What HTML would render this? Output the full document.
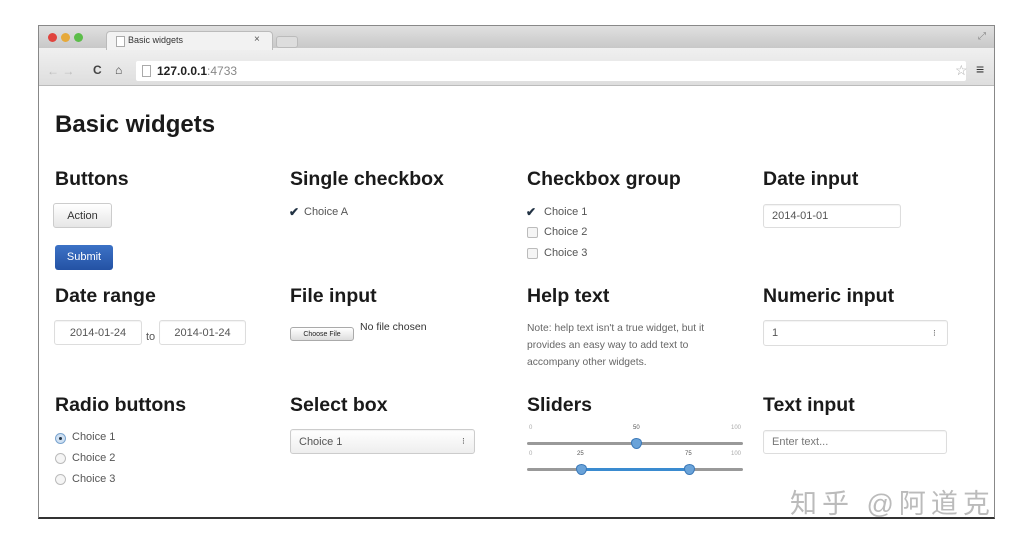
<!DOCTYPE html>
<html><head><meta charset="utf-8"><style>
body{margin:0;width:1022px;height:544px;background:#fff;position:relative;overflow:hidden;font-family:"Liberation Sans",Arial,sans-serif;color:#333}
.a{position:absolute;white-space:nowrap}
.h{position:absolute;font-weight:bold;font-size:19.5px;color:#1a1a1a;white-space:nowrap}
.t{font-size:11px;color:#555}
.inp{position:absolute;border:1px solid #ddd;border-radius:3px;background:#fff;box-shadow:inset 0 1px 1px rgba(0,0,0,.05);font-size:11px;color:#555;box-sizing:border-box;padding-left:8px;display:flex;align-items:center}
.cb{position:absolute;width:9px;height:9px;border:1px solid #bbb;border-radius:2px;background:#f5f5f5}
.rd{position:absolute;width:9px;height:9px;border:1px solid #bbb;border-radius:50%;background:#f5f5f5}
.track{position:absolute;height:3px;background:#999;border-radius:2px}
.hd{position:absolute;width:9px;height:9px;background:#6aa3d9;border:1px solid #3a78b8;border-radius:50% 50% 50% 50%/40% 40% 60% 60%}
.sl{position:absolute;font-size:6px;color:#aaa}
</style></head><body>
<div class="a" style="left:38px;top:25px;width:957px;height:494px;border:1px solid #888;border-bottom:2px solid #333;box-sizing:border-box;background:#fff"></div>
<div class="a" style="left:39px;top:26px;width:955px;height:22px;background:linear-gradient(#e0e0e0,#c8c8c8)"></div>
<div class="a" style="left:39px;top:48px;width:955px;height:37px;background:linear-gradient(#f0f0f0,#dedede);border-bottom:1px solid #bbb"></div>
<div class="a" style="left:48px;top:33px;width:9px;height:9px;border-radius:50%;background:#e0443e"></div>
<div class="a" style="left:61px;top:33px;width:9px;height:9px;border-radius:50%;background:#e6a93a"></div>
<div class="a" style="left:74px;top:33px;width:9px;height:9px;border-radius:50%;background:#5cbd4a"></div>
<div class="a" style="left:106px;top:31px;width:165px;height:18px;background:#f2f2f2;border:1px solid #bbb;border-bottom:none;border-radius:4px 4px 0 0"></div>
<div class="a" style="left:116px;top:36px;width:7px;height:9px;border:1px solid #aaa;background:#fff"></div>
<div class="a" style="left:128px;top:35px;font-size:9px;color:#333">Basic widgets</div>
<div class="a" style="left:254px;top:34px;font-size:10px;color:#555">×</div>
<div class="a" style="left:276px;top:36px;width:20px;height:10px;border:1px solid #bbb;border-radius:3px;background:#ddd"></div>
<div class="a" style="left:978px;top:31px;font-size:10px;color:#888">⤢</div>
<div class="a" style="left:47px;top:64px;font-size:12px;color:#bbb">← →</div>
<div class="a" style="left:93px;top:63px;font-size:12px;font-weight:bold;color:#444">C</div>
<div class="a" style="left:115px;top:63px;font-size:12px;font-weight:bold;color:#444">⌂</div>
<div class="a" style="left:136px;top:61px;width:830px;height:20px;background:#fff;border-radius:2px"></div>
<div class="a" style="left:142px;top:65px;width:7px;height:10px;border:1px solid #aaa"></div>
<div class="a" style="left:157px;top:64px;font-size:12px;color:#222;font-weight:bold">127.0.0.1<span style="color:#888;font-weight:normal">:4733</span></div>
<div class="a" style="left:955px;top:62px;font-size:14px;color:#aaa">☆</div>
<div class="a" style="left:976px;top:61px;font-size:14px;color:#333">≡</div>

<div class="a" style="left:55px;top:111px;font-size:24px;font-weight:bold;color:#1a1a1a">Basic widgets</div>

<div class="h" style="left:55px;top:168px">Buttons</div>
<div class="h" style="left:290px;top:168px">Single checkbox</div>
<div class="h" style="left:527px;top:168px">Checkbox group</div>
<div class="h" style="left:763px;top:168px">Date input</div>

<div class="a" style="left:53px;top:203px;width:59px;height:25px;border:1px solid #ccc;border-radius:3px;background:linear-gradient(#fff,#e6e6e6);font-size:11px;color:#333;text-align:center;line-height:25px;box-sizing:border-box">Action</div>
<div class="a" style="left:55px;top:245px;width:58px;height:25px;border-radius:3px;background:linear-gradient(#3c72c6,#2452a4);font-size:11px;color:#fff;text-align:center;line-height:25px">Submit</div>

<div class="a" style="left:289px;top:205px;font-size:12px;color:#234;font-weight:bold">✔</div>
<div class="a t" style="left:304px;top:206px">Choice A</div>

<div class="a" style="left:526px;top:205px;font-size:12px;color:#234;font-weight:bold">✔</div>
<div class="a t" style="left:544px;top:206px">Choice 1</div>
<div class="cb" style="left:527px;top:227px"></div>
<div class="a t" style="left:544px;top:226px">Choice 2</div>
<div class="cb" style="left:527px;top:248px"></div>
<div class="a t" style="left:544px;top:247px">Choice 3</div>

<div class="inp" style="left:763px;top:204px;width:138px;height:24px">2014-01-01</div>

<div class="h" style="left:55px;top:285px">Date range</div>
<div class="h" style="left:290px;top:285px">File input</div>
<div class="h" style="left:527px;top:285px">Help text</div>
<div class="h" style="left:763px;top:285px">Numeric input</div>

<div class="inp" style="left:54px;top:320px;width:88px;height:25px;justify-content:center;padding:0">2014-01-24</div>
<div class="a t" style="left:146px;top:331px">to</div>
<div class="inp" style="left:159px;top:320px;width:87px;height:25px;justify-content:center;padding:0">2014-01-24</div>

<div class="a" style="left:290px;top:327px;width:64px;height:14px;border:1px solid #aaa;border-radius:3px;background:linear-gradient(#fff,#ddd);font-size:7px;text-align:center;line-height:14px;box-sizing:border-box;color:#222">Choose File</div>
<div class="a" style="left:360px;top:321px;font-size:10.5px;color:#333">No file chosen</div>

<div class="a" style="left:527px;top:320px;font-size:10.3px;color:#666;line-height:17px">Note: help text isn't a true widget, but it<br>provides an easy way to add text to<br>accompany other widgets.</div>

<div class="inp" style="left:763px;top:320px;width:185px;height:26px">1</div>
<div class="a" style="left:933px;top:328px;font-size:9px;color:#555">⁝</div>

<div class="h" style="left:55px;top:394px">Radio buttons</div>
<div class="h" style="left:290px;top:394px">Select box</div>
<div class="h" style="left:527px;top:394px">Sliders</div>
<div class="h" style="left:763px;top:394px">Text input</div>

<div class="rd" style="left:55px;top:433px;background:#cfe0f2;border-color:#7aa4cf"></div>
<div class="a" style="left:59px;top:437px;width:3px;height:3px;border-radius:50%;background:#234"></div>
<div class="a t" style="left:72px;top:431px">Choice 1</div>
<div class="rd" style="left:55px;top:453px"></div>
<div class="a t" style="left:72px;top:452px">Choice 2</div>
<div class="rd" style="left:55px;top:474px"></div>
<div class="a t" style="left:72px;top:473px">Choice 3</div>

<div class="inp" style="left:290px;top:429px;width:185px;height:25px;background:linear-gradient(#fff,#eee);border-color:#ccc">Choice 1</div>
<div class="a" style="left:462px;top:436px;font-size:9px;color:#444">⁝</div>

<div class="sl" style="left:529px;top:425px">0</div>
<div class="sl" style="left:633px;top:425px;color:#555">50</div>
<div class="sl" style="left:731px;top:425px">100</div>
<div class="track" style="left:527px;top:442px;width:216px"></div>
<div class="hd" style="left:631px;top:438px"></div>
<div class="sl" style="left:529px;top:451px">0</div>
<div class="sl" style="left:577px;top:451px;color:#555">25</div>
<div class="sl" style="left:685px;top:451px;color:#555">75</div>
<div class="sl" style="left:731px;top:451px">100</div>
<div class="track" style="left:527px;top:468px;width:216px"></div>
<div class="track" style="left:581px;top:468px;width:108px;background:#3a8bd0"></div>
<div class="hd" style="left:576px;top:464px"></div>
<div class="hd" style="left:684px;top:464px"></div>

<div class="inp" style="left:763px;top:430px;width:184px;height:24px;color:#777">Enter text...</div>

<div class="a" style="left:790px;top:482px;font-size:27px;color:#bbb;letter-spacing:5px;font-family:'Liberation Sans','Noto Sans CJK SC',sans-serif">知乎 @阿道克</div>
</body></html>
